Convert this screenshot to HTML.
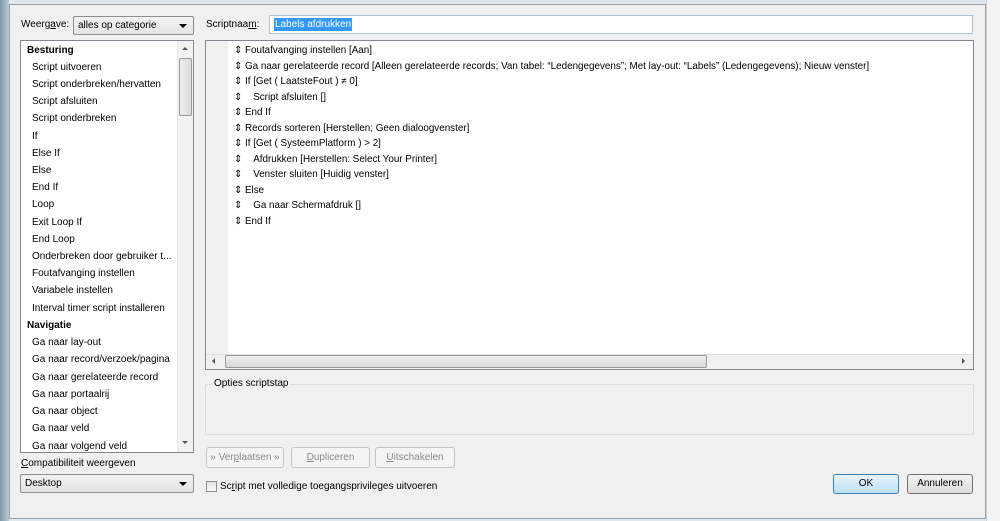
<!DOCTYPE html>
<html><head><style>
*{margin:0;padding:0;box-sizing:border-box}
body{width:1000px;height:521px;overflow:hidden;background:#dfe7ee;font-family:"Liberation Sans",sans-serif;font-size:10px;color:#000;position:relative}
.a{position:absolute}
.dlg{left:9px;top:4px;width:977px;height:515px;background:#f0f0f0;border:1px solid #9aa3ab}
.combo{border:1px solid #8e8f8f;border-radius:2px;background:linear-gradient(#f2f2f2,#e4e4e4);height:19px;padding:2px 4px;line-height:14px}
.arr{position:absolute;right:6px;top:7px;width:0;height:0;border-left:4px solid transparent;border-right:4px solid transparent;border-top:4px solid #000}
.list{left:20px;top:40px;width:174px;height:413px;background:#fff;border:1px solid #828790;overflow:hidden}
.list div{position:absolute;left:11px;white-space:nowrap}
.list b{position:absolute;left:6px}
.sb{position:absolute;right:0;top:0;width:16px;height:411px;background:#f2f2f2;border-left:1px solid #e8e8e8}
.btn{border:1px solid #c4c4c4;border-radius:3px;background:#f4f4f4;color:#8a8a8a;text-align:center;line-height:19px;height:21px}
.btn2{border:1px solid #707070;border-radius:3px;background:linear-gradient(#f2f2f2,#dcdcdc);text-align:center;line-height:18px;height:20px}
.sl div{position:absolute;white-space:nowrap}
</style></head><body>
<div class="a" style="left:0;top:0;width:9px;height:521px;background:linear-gradient(90deg,#7f9aa8,#b9cbd6)"></div>
<div class="a" style="left:986px;top:0;width:14px;height:521px;background:#f4f4f4;border-left:1px solid #c8ced2"></div>
<div class="a dlg"></div>
<div class="a" style="left:21px;top:19px">Weerg<u>a</u>ve:</div>
<div class="a combo" style="left:73px;top:16px;width:121px">alles op categorie<span class="arr"></span></div>
<div class="a" style="left:206px;top:19px">Scriptnaa<u>m</u>:</div>
<div class="a" style="left:269px;top:15px;width:704px;height:19px;border:1px solid #aebfd0;background:#fff"><span style="position:absolute;left:4px;top:2px;background:#3399ff;color:#fff;padding:0 1px;line-height:13px">Labels afdrukken</span></div>
<div class="a list">
<b style="top:4px">Besturing</b>
<div style="top:21px">Script uitvoeren</div>
<div style="top:38px">Script onderbreken/hervatten</div>
<div style="top:55px">Script afsluiten</div>
<div style="top:72px">Script onderbreken</div>
<div style="top:90px">If</div>
<div style="top:107px">Else If</div>
<div style="top:124px">Else</div>
<div style="top:141px">End If</div>
<div style="top:158px">Loop</div>
<div style="top:176px">Exit Loop If</div>
<div style="top:193px">End Loop</div>
<div style="top:210px">Onderbreken door gebruiker t...</div>
<div style="top:227px">Foutafvanging instellen</div>
<div style="top:244px">Variabele instellen</div>
<div style="top:262px">Interval timer script installeren</div>
<b style="top:279px">Navigatie</b>
<div style="top:296px">Ga naar lay-out</div>
<div style="top:313px">Ga naar record/verzoek/pagina</div>
<div style="top:331px">Ga naar gerelateerde record</div>
<div style="top:348px">Ga naar portaalrij</div>
<div style="top:365px">Ga naar object</div>
<div style="top:382px">Ga naar veld</div>
<div style="top:400px">Ga naar volgend veld</div>
<span class="sb"><span style="position:absolute;left:4px;top:6px;border-left:3px solid transparent;border-right:3px solid transparent;border-bottom:3px solid #555"></span><span style="position:absolute;left:1px;top:17px;width:13px;height:58px;border:1px solid #9a9a9a;border-radius:2px;background:linear-gradient(90deg,#eee,#ddd)"></span><span style="position:absolute;left:4px;top:400px;border-left:3px solid transparent;border-right:3px solid transparent;border-top:3px solid #555"></span></span>
</div>
<div class="a" style="left:21px;top:458px"><u>C</u>ompatibiliteit weergeven</div>
<div class="a combo" style="left:20px;top:474px;width:174px">Desktop<span class="arr"></span></div>
<div class="a" style="left:205px;top:40px;width:769px;height:330px;background:#fff;border:1px solid #828790"></div>
<div class="a" style="left:206px;top:41px;width:22px;height:313px;background:#f0f0f0"></div>
<div class="a sl" style="left:234px;top:43px;width:730px;font-size:9.85px;line-height:15.5px">
<div style="top:0">⇕ Foutafvanging instellen [Aan]</div>
<div style="top:15.5px">⇕ Ga naar gerelateerde record [Alleen gerelateerde records; Van tabel: “Ledengegevens”; Met lay-out: “Labels” (Ledengegevens); Nieuw venster]</div>
<div style="top:31px">⇕ If [Get ( LaatsteFout ) ≠ 0]</div>
<div style="top:46.5px">⇕ &nbsp;&nbsp;&nbsp;Script afsluiten []</div>
<div style="top:62px">⇕ End If</div>
<div style="top:77.5px">⇕ Records sorteren [Herstellen; Geen dialoogvenster]</div>
<div style="top:93px">⇕ If [Get ( SysteemPlatform ) &gt; 2]</div>
<div style="top:108.5px">⇕ &nbsp;&nbsp;&nbsp;Afdrukken [Herstellen: Select Your Printer]</div>
<div style="top:124px">⇕ &nbsp;&nbsp;&nbsp;Venster sluiten [Huidig venster]</div>
<div style="top:139.5px">⇕ Else</div>
<div style="top:155px">⇕ &nbsp;&nbsp;&nbsp;Ga naar Schermafdruk []</div>
<div style="top:170.5px">⇕ End If</div>
</div>
<div class="a" style="left:206px;top:354px;width:767px;height:15px;background:#f0f0f0;border-top:1px solid #e0e0e0"></div>
<div class="a" style="left:225px;top:355px;width:482px;height:13px;border:1px solid #9a9a9a;border-radius:2px;background:linear-gradient(#eee,#d8d8d8)"></div>
<div class="a" style="left:212px;top:358px;border-top:3px solid transparent;border-bottom:3px solid transparent;border-right:3px solid #555"></div>
<div class="a" style="left:962px;top:358px;border-top:3px solid transparent;border-bottom:3px solid transparent;border-left:3px solid #555"></div>
<div class="a" style="left:205px;top:384px;width:769px;height:51px;border:1px solid #dcdcdc;border-radius:2px"></div>
<div class="a" style="left:212px;top:378px;background:#f0f0f0;padding:0 2px">Opties scriptstap</div>
<div class="a btn" style="left:206px;top:447px;width:78px">» Ver<u>p</u>laatsen »</div>
<div class="a btn" style="left:291px;top:447px;width:79px"><u>D</u>upliceren</div>
<div class="a btn" style="left:375px;top:447px;width:80px"><u>U</u>itschakelen</div>
<div class="a" style="left:206px;top:481px;width:11px;height:11px;border:1px solid #8f8f8f;background:linear-gradient(#e4e4e4,#fafafa)"></div>
<div class="a" style="left:220px;top:481px">Sc<u>r</u>ipt met volledige toegangsprivileges uitvoeren</div>
<div class="a btn2" style="left:833px;top:474px;width:66px;border-color:#3c7fb1;background:linear-gradient(#e8f4fc,#bfe0f6)">OK</div>
<div class="a btn2" style="left:907px;top:474px;width:66px">Annuleren</div>
</body></html>
